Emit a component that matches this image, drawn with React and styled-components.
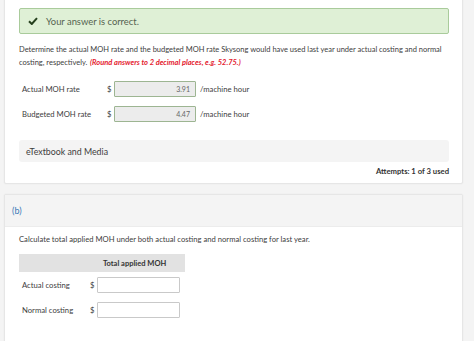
import React from "react";
import styled, { createGlobalStyle } from "styled-components";

const Global = createGlobalStyle`
  html, body { margin: 0; padding: 0; background: #f4f4f4; }
  body { font-family: Lato, "Open Sans", sans-serif; color: #3d3d3d; }
`;

const Page = styled.div`
  width: 474px;
  height: 341px;
  overflow: hidden;
  padding: 0 11px 0 4px;
  box-sizing: border-box;
  display: flex;
  flex-direction: column;
  gap: 10px;
`;

const Card = styled.section`
  background: #fff;
  border: 1px solid #e6e6e6;
  border-radius: 2px;
  box-shadow: 0 0 2px rgba(0, 0, 0, 0.06);
  margin-top: ${(p) => (p.$first ? "-2px" : "0")};
  flex-shrink: 0;
`;

const Body = styled.div`
  padding: ${(p) => p.$pad || "9px 14px 10px 14px"};
`;

const Banner = styled.div`
  display: flex;
  align-items: center;
  gap: 8px;
  height: 24px;
  padding: 0 8px;
  background: #dff0d6;
  border: 1px solid #a9cb9b;
  border-radius: 2px;
  font-size: 9.4px;
  color: #55634f;
`;

const Prompt = styled.p`
  margin: ${(p) => p.$m || "9px 0 0 0"};
  font-size: ${(p) => p.$fs || 7.5}px;
  line-height: 13px;
  color: #404040;
`;

const Hint = styled.em`
  color: #e4222f;
  font-weight: 700;
  margin-left: 1px;
`;

const Rows = styled.div`
  display: flex;
  flex-direction: column;
  gap: 9px;
  margin: ${(p) => p.$m || "12px 0 0 3px"};
`;

const Row = styled.div`
  display: flex;
  align-items: center;
  height: 16px;
  font-size: 7.7px;
  color: #404040;
`;

const Label = styled.span`
  width: ${(p) => p.$w}px;
  flex-shrink: 0;
`;

const Dollar = styled.span`
  width: 7px;
  flex-shrink: 0;
`;

const Field = styled.div`
  box-sizing: border-box;
  width: ${(p) => p.$w}px;
  height: 16px;
  border: 1px solid ${(p) => (p.$ok ? "#9db592" : "#c9c9c9")};
  background: ${(p) => (p.$ok ? "#ececec" : "#fff")};
  border-radius: 1px;
  display: flex;
  align-items: center;
  justify-content: flex-end;
  padding-right: 5px;
  font-size: 7px;
  color: #666;
`;

const Unit = styled.span`
  margin-left: 4px;
`;

const Media = styled.div`
  margin-top: 18px;
  height: 22px;
  background: #f4f4f4;
  border-radius: 3px;
  display: flex;
  align-items: center;
  padding-left: 7px;
  font-size: 8.8px;
  color: #3d3d3d;
`;

const Attempts = styled.div`
  margin-top: 4px;
  text-align: right;
  font-size: 7.7px;
  font-weight: 700;
  color: #333;
`;

const Header = styled.div`
  height: 31px;
  background: #f4f4f4;
  border-bottom: 1px solid #ececec;
  display: flex;
  align-items: center;
  padding-left: 7px;
  font-size: 9px;
  color: #3d79b7;
`;

const TableHead = styled.div`
  display: flex;
  height: 18px;
  width: 166px;
  background: #e2e2e2;
  margin-top: 8px;
  align-items: center;
  font-size: 7.5px;
  font-weight: 700;
  color: #333;
`;

const HeadCell = styled.span`
  margin-left: 84px;
`;

const Check = () => (
  <svg width="10" height="8" viewBox="0 0 10 8">
    <path d="M1 4.2 L3.8 7 L9 1.2" fill="none" stroke="#26401e" strokeWidth="2" />
  </svg>
);

export default function App() {
  return (
    <>
      <Global />
      <Page>
        <Card $first>
          <Body $pad="9px 13px 7px 14px">
            <Banner>
              <Check />
              <span>Your answer is correct.</span>
            </Banner>
            <Prompt>
              Determine the actual MOH rate and the budgeted MOH rate Skysong would have used last year under actual costing and normal
              costing, respectively.<Hint> (Round answers to 2 decimal places, e.g. 52.75.)</Hint>
            </Prompt>
            <Rows>
              <Row>
                <Label $w={85}>Actual MOH rate</Label>
                <Dollar>$</Dollar>
                <Field $w={82} $ok>3.91</Field>
                <Unit>/machine hour</Unit>
              </Row>
              <Row>
                <Label $w={85}>Budgeted MOH rate</Label>
                <Dollar>$</Dollar>
                <Field $w={82} $ok>4.47</Field>
                <Unit>/machine hour</Unit>
              </Row>
            </Rows>
            <Media>eTextbook and Media</Media>
            <Attempts>Attempts: 1 of 3 used</Attempts>
          </Body>
        </Card>
        <Card>
          <Header>(b)</Header>
          <Body $pad="6px 14px 30px 14px">
            <Prompt $m="0" $fs={7.65}>
              Calculate total applied MOH under both actual costing and normal costing for last year.
            </Prompt>
            <TableHead>
              <HeadCell>Total applied MOH</HeadCell>
            </TableHead>
            <Rows $m="5px 0 0 3px">
              <Row>
                <Label $w={68}>Actual costing</Label>
                <Dollar>$</Dollar>
                <Field $w={83} />
              </Row>
              <Row>
                <Label $w={68}>Normal costing</Label>
                <Dollar>$</Dollar>
                <Field $w={83} />
              </Row>
            </Rows>
          </Body>
        </Card>
      </Page>
    </>
  );
}
